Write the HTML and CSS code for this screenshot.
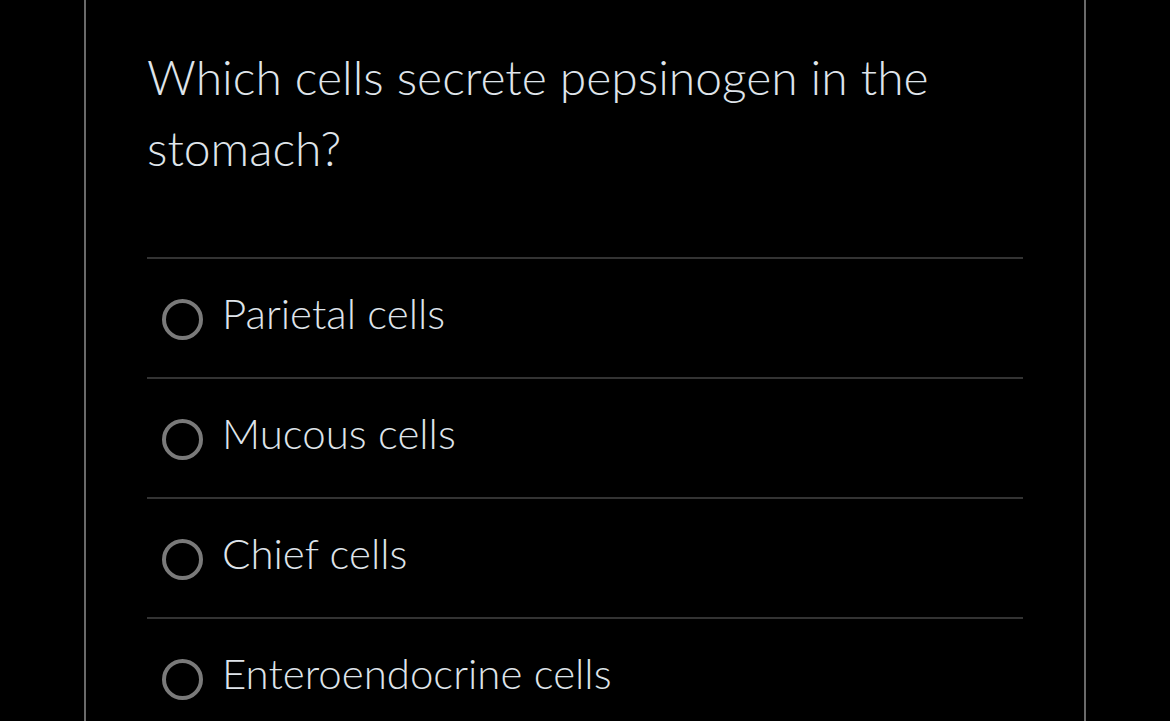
FILE: index.html
```html
<!DOCTYPE html>
<html>
<head>
<meta charset="utf-8">
<link rel="stylesheet" href="styles.css">
</head>
<body>
<div class="card">
  <div class="question">Which cells secrete pepsinogen in the stomach?</div>
  <div class="options">
    <div class="option"><span class="radio"></span><span class="label">Parietal cells</span></div>
    <div class="option"><span class="radio"></span><span class="label">Mucous cells</span></div>
    <div class="option"><span class="radio"></span><span class="label">Chief cells</span></div>
    <div class="option"><span class="radio"></span><span class="label">Enteroendocrine cells</span></div>
  </div>
</div>
</body>
</html>
```
FILE: styles.css
```css
html, body {
  margin: 0;
  padding: 0;
  background: #000;
  height: 100%;
  overflow: hidden;
}
body {
  font-family: Lato, "Open Sans", sans-serif;
  font-weight: 300;
  color: #dfe4ea;
}
.card {
  margin-left: 84px;
  width: 1002px;
  box-sizing: border-box;
  min-height: 100%;
  border-left: 2px solid #6a6a6a;
  border-right: 2px solid #6a6a6a;
  padding: 41px 60px 0 61px;
}
.question {
  font-size: 48px;
  line-height: 71px;
  width: 820px;
}
.options {
  margin-top: 74px;
  width: 876px;
}
.option {
  display: flex;
  align-items: center;
  height: 118px;
  box-sizing: content-box;
  border-top: 2px solid #333;
}
.option .radio {
  width: 33px;
  height: 33px;
  border: 4.5px solid #7a7a7a;
  border-radius: 50%;
  margin-left: 15px;
  margin-top: 2px;
  flex: none;
}
.option .label {
  font-size: 42px;
  line-height: 42px;
  margin-left: 19px;
  margin-top: -11px;
}
```
